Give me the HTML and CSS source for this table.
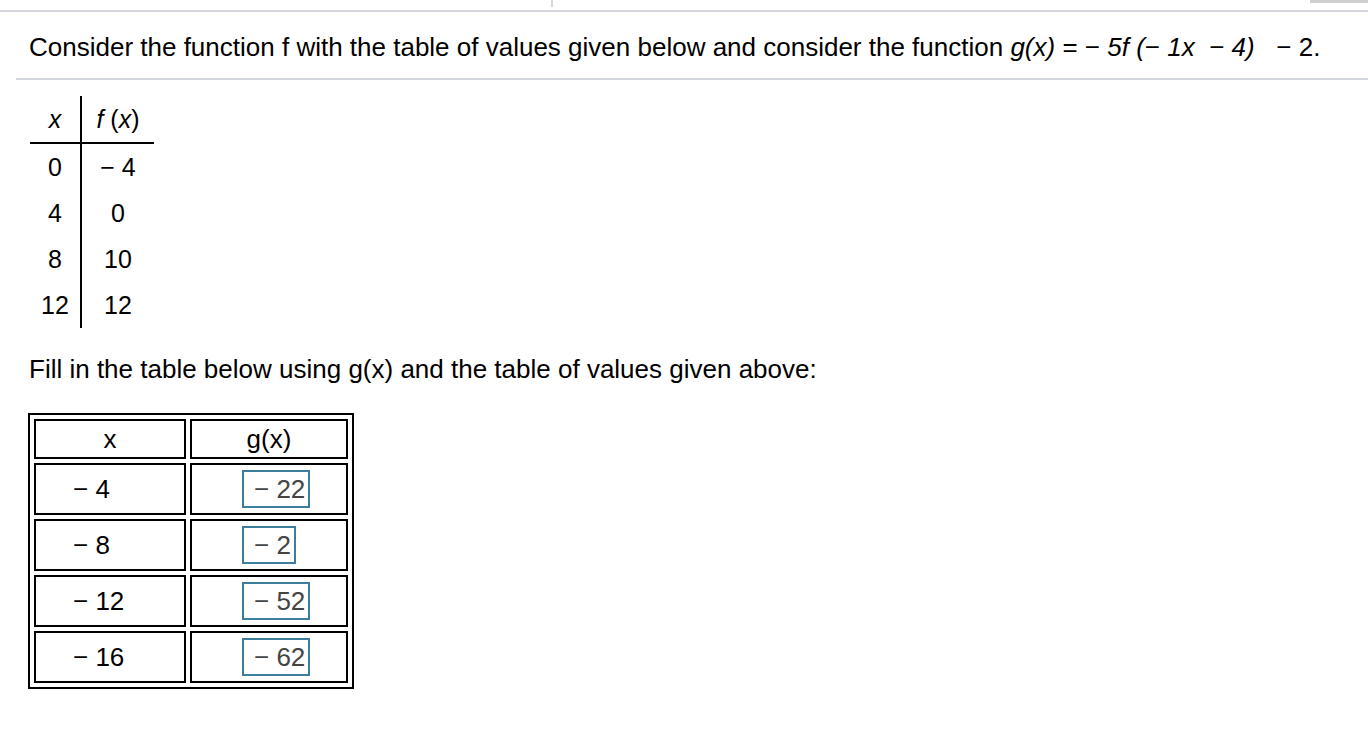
FILE: index.html
```html
<!DOCTYPE html>
<html lang="en">
<head>
<meta charset="utf-8">
<title>Function transformation</title>
<link rel="stylesheet" href="styles.css">
</head>
<body>
<div class="topbar">
  <div class="topbar-left"></div>
  <div class="topbar-spacer"></div>
  <div class="topbar-tab"></div>
</div>
<div class="question">
  <p class="prompt">Consider the function f with the table of values given below and consider the function <span class="math"><i>g(x)</i> = − <i>5f</i> <i>(</i>− <i>1x</i>&nbsp; − <i>4)</i> &nbsp; − 2.</span></p>
</div>
<div class="content">
  <table class="ftable">
    <thead>
      <tr><th class="c1"><i>x</i></th><th class="c2"><i>f</i> (<i>x</i>)</th></tr>
    </thead>
    <tbody>
      <tr><td class="c1">0</td><td class="c2">− 4</td></tr>
      <tr><td class="c1">4</td><td class="c2">0</td></tr>
      <tr><td class="c1">8</td><td class="c2">10</td></tr>
      <tr><td class="c1">12</td><td class="c2">12</td></tr>
    </tbody>
  </table>
  <p class="fill">Fill in the table below using g(x) and the table of values given above:</p>
  <table class="gtable">
    <tr class="head"><td class="gc1">x</td><td class="gc2">g(x)</td></tr>
    <tr><td class="gc1 left">− 4</td><td class="gc2 left"><span class="answer">− 22</span></td></tr>
    <tr><td class="gc1 left">− 8</td><td class="gc2 left"><span class="answer">− 2</span></td></tr>
    <tr><td class="gc1 left">− 12</td><td class="gc2 left"><span class="answer">− 52</span></td></tr>
    <tr><td class="gc1 left">− 16</td><td class="gc2 left"><span class="answer">− 62</span></td></tr>
  </table>
</div>
</body>
</html>
```
FILE: styles.css
```css
html, body {
  margin: 0;
  padding: 0;
  background: #fff;
}
body {
  font-family: "Liberation Sans", Arial, sans-serif;
  color: #000;
  width: 1368px;
}
.topbar {
  display: flex;
  align-items: flex-start;
  height: 10px;
  border-bottom: 2px solid #d3d5df;
}
.topbar-left {
  width: 551px;
  height: 7px;
  border-right: 2px solid #d3d5df;
}
.topbar-spacer {
  flex: 1;
}
.topbar-tab {
  width: 58px;
  height: 3px;
  background: #cfcfcf;
}
.question {
  margin-left: 16px;
  padding: 20px 0 16px 13px;
  border-bottom: 2px solid #d3d5df;
}
.prompt {
  margin: 0;
  font-size: 26px;
  line-height: 30px;
  white-space: nowrap;
}
.math i {
  font-style: italic;
}
.content {
  padding: 16px 0 0 30px;
}
.ftable {
  border-collapse: collapse;
  font-size: 25px;
}
.ftable th, .ftable td {
  padding: 0;
  height: 46px;
  text-align: center;
  font-weight: normal;
  vertical-align: middle;
  line-height: 30px;
}
.ftable th {
  border-bottom: 2px solid #000;
}
.ftable .c1 {
  width: 50px;
  border-right: 2px solid #000;
}
.ftable .c2 {
  width: 72px;
}
.fill {
  margin: 26px 0 0 -1px;
  font-size: 26px;
  line-height: 30px;
}
.gtable {
  margin: 29px 0 0 -2px;
  border: 2px solid #000;
  border-spacing: 4px;
  font-size: 26px;
  line-height: 30px;
}
.gtable td {
  border: 2px solid #000;
  padding: 0;
  vertical-align: middle;
}
.gtable .head td {
  height: 36px;
  text-align: center;
}
.gtable tr:not(.head) td {
  height: 48px;
}
.gtable .gc1 {
  width: 148px;
}
.gtable .gc2 {
  width: 154px;
}
.gtable .gc1.left {
  padding-left: 37px;
  width: 111px;
}
.gtable .gc2.left {
  padding-left: 50px;
  width: 104px;
}
.answer {
  display: inline-block;
  vertical-align: middle;
  border: 2px solid #3d7e9c;
  color: #444;
  padding: 2px 3px 2px 10px;
  line-height: 30px;
}
```
